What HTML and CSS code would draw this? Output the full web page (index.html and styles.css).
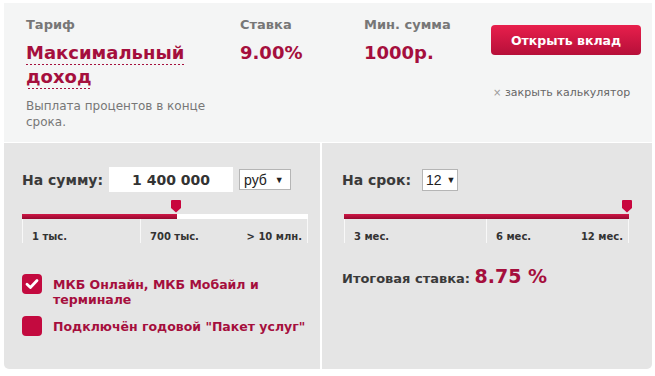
FILE: index.html
```html
<!DOCTYPE html>
<html>
<head>
    <meta charset="UTF-8">
    <title>Калькулятор вклада</title>
    <link rel="stylesheet" href="styles.css">
</head>
<body>
    <div class="calc">
        <div class="summary">
            <div class="col col-tariff">
                <div class="label">Тариф</div>
                <div class="value"><span class="dashed">Максимальный доход</span></div>
                <p class="note">Выплата процентов в конце срока.</p>
            </div>
            <div class="col col-rate">
                <div class="label">Ставка</div>
                <div class="value">9.00%</div>
            </div>
            <div class="col col-min">
                <div class="label">Мин. сумма</div>
                <div class="value">1000р.</div>
            </div>
            <div class="col col-action">
                <button class="open-button">Открыть вклад</button>
                <a class="close-link" href="#"><span class="close-x">×</span>закрыть калькулятор</a>
            </div>
        </div>

        <div class="params">
            <div class="pane pane-sum">
                <div class="field">
                    <span class="field-label">На сумму:</span>
                    <div class="amount">1 400 000</div>
                    <div class="select select-currency">руб <span class="arrow">▼</span></div>
                </div>
                <div class="slider">
                    <div class="track">
                        <div class="fill" style="width: 54.3%"></div>
                        <svg class="thumb" style="left: 53.9%" width="10" height="13" viewBox="0 0 10 13"><path d="M1 0H9A1 1 0 0 1 10 1V8L5 12.5L0 8V1A1 1 0 0 1 1 0Z" fill="#c8063e"/></svg>
                    </div>
                    <div class="scale">
                        <div class="scale-cell scale-first"><span>1 тыс.</span></div>
                        <div class="scale-cell scale-last"><span>700 тыс.</span><span>&gt; 10 млн.</span></div>
                    </div>
                </div>
                <div class="options">
                    <label class="option">
                        <span class="checkbox checked"><svg width="14" height="12" viewBox="0 0 14 12"><path d="M2 6.2L5.4 9.4L12 2.6" fill="none" stroke="#fff" stroke-width="2.8" stroke-linecap="round" stroke-linejoin="round"/></svg></span>
                        <span class="option-text">МКБ Онлайн, МКБ Мобайл и терминале</span>
                    </label>
                    <label class="option">
                        <span class="checkbox"></span>
                        <span class="option-text">Подключён годовой "Пакет услуг"</span>
                    </label>
                </div>
            </div>

            <div class="pane pane-term">
                <div class="field">
                    <span class="field-label">На срок:</span>
                    <div class="select select-term">12 <span class="arrow">▼</span></div>
                </div>
                <div class="slider slider-term">
                    <div class="track">
                        <div class="fill" style="width: 100%"></div>
                        <svg class="thumb" style="left: 99.3%" width="10" height="13" viewBox="0 0 10 13"><path d="M1 0H9A1 1 0 0 1 10 1V8L5 12.5L0 8V1A1 1 0 0 1 1 0Z" fill="#c8063e"/></svg>
                    </div>
                    <div class="scale">
                        <div class="scale-cell scale-first"><span>3 мес.</span></div>
                        <div class="scale-cell scale-last"><span>6 мес.</span><span>12 мес.</span></div>
                    </div>
                </div>
                <div class="total">
                    Итоговая ставка: <span class="total-value">8.75 %</span>
                </div>
            </div>
        </div>
    </div>
</body>
</html>
```

FILE: styles.css
```css
body {
    margin: 0;
    background: #fff;
    font-family: "DejaVu Sans", Verdana, sans-serif;
    color: #333;
}

.calc {
    width: 648px;
    margin: 3px 0 0 4px;
}

/* верхняя часть: тариф, ставка, кнопка */
.summary {
    display: flex;
    background: #f4f5f5;
    height: 139px;
    box-sizing: border-box;
    padding: 14px 0 0 22px;
}

.col-tariff {
    width: 214px;
}

.col-rate {
    width: 124px;
}

.col-min {
    width: 127px;
}

.label {
    font-size: 13px;
    font-weight: bold;
    color: #777;
    line-height: 16px;
}

.value {
    margin-top: 8px;
    font-size: 18px;
    font-weight: bold;
    color: #a50f3d;
    line-height: 24px;
}

.dashed {
    padding-bottom: 2px;
    background: linear-gradient(to right, #a50f3d 50%, transparent 50%) repeat-x left bottom / 4px 1px;
}

.note {
    margin: 9px 0 0;
    width: 190px;
    font-size: 12px;
    line-height: 16px;
    color: #777;
}

.col-action {
    display: flex;
    flex-direction: column;
    padding-top: 8px;
}

.open-button {
    width: 150px;
    height: 30px;
    border: none;
    border-radius: 4px;
    background: linear-gradient(#e81f4c, #b60f39);
    color: #fff;
    font-family: "DejaVu Sans", Verdana, sans-serif;
    font-size: 12.5px;
    font-weight: bold;
    cursor: pointer;
}

.close-link {
    margin-top: 31px;
    font-size: 11px;
    color: #666;
    text-decoration: none;
}

.close-x {
    display: inline-block;
    width: 12px;
    margin-left: 2px;
    color: #999;
    font-size: 10px;
}

/* нижняя часть: параметры */
.params {
    display: flex;
    height: 226px;
    margin-top: 1px;
}

.pane {
    background: #e5e5e5;
    padding-top: 24px;
    box-sizing: border-box;
}

.pane-sum {
    width: 316px;
    padding-left: 18px;
    border-radius: 0 0 0 5px;
}

.pane-term {
    width: 330px;
    margin-left: 2px;
    padding-left: 20px;
    border-radius: 0 0 5px 0;
}

.field {
    display: flex;
    align-items: center;
    height: 25px;
}

.field-label {
    font-size: 14px;
    font-weight: bold;
    color: #3a3a3a;
    margin-right: 6px;
}

.pane-term .field-label {
    margin-right: 11px;
}

.amount {
    width: 124px;
    height: 25px;
    background: #fff;
    text-align: center;
    font-size: 14px;
    font-weight: bold;
    line-height: 26px;
    color: #333;
    margin-right: 6px;
}

.select {
    height: 21px;
    box-sizing: border-box;
    border: 1px solid #b5b5b5;
    background: #fff;
    font-family: "Liberation Sans", Arial, sans-serif;
    font-size: 14px;
    line-height: 20px;
    color: #222;
    padding-left: 4px;
    white-space: nowrap;
}

.select-currency {
    width: 52px;
}

.select-term {
    width: 36px;
    height: 22px;
    padding-left: 3px;
}

.arrow {
    font-size: 9px;
    margin-left: 4px;
    vertical-align: 2px;
}

.select-term .arrow {
    margin-left: 1px;
}

.slider {
    width: 286px;
    margin-top: 22px;
}

.slider-term {
    width: 285px;
    margin-left: 2px;
}

.track {
    position: relative;
    height: 5px;
    background: #fff;
}

.fill {
    height: 100%;
    background: linear-gradient(#cf1846, #96082f);
}

.thumb {
    position: absolute;
    top: -14px;
    transform: translateX(-50%);
}

.scale {
    display: flex;
    height: 24px;
}

.scale-cell {
    display: flex;
    align-items: flex-end;
    border-left: 1px solid #f8f8f8;
    font-size: 10px;
    font-weight: bold;
    color: #333;
    box-sizing: border-box;
    padding: 0 5px 1px 9px;
}

.scale-first {
    width: 118px;
}

.slider-term .scale-first {
    width: 142px;
}

.scale-last {
    flex: 1;
    justify-content: space-between;
    border-right: 1px solid #f8f8f8;
}

.options {
    margin-top: 31px;
}

.option {
    display: flex;
    margin-bottom: 9px;
    cursor: pointer;
}

.checkbox {
    flex: none;
    width: 20px;
    height: 20px;
    border-radius: 4px;
    background: #c30a3f;
    display: flex;
    align-items: center;
    justify-content: center;
    margin-right: 11px;
}

.option-text {
    width: 256px;
    font-size: 12.5px;
    font-weight: bold;
    line-height: 15px;
    color: #a50f3d;
    padding-top: 3px;
}

.total {
    margin-top: 22px;
    font-size: 13px;
    font-weight: bold;
    color: #3a3a3a;
}

.total-value {
    font-size: 19px;
    color: #a50f3d;
}
```
